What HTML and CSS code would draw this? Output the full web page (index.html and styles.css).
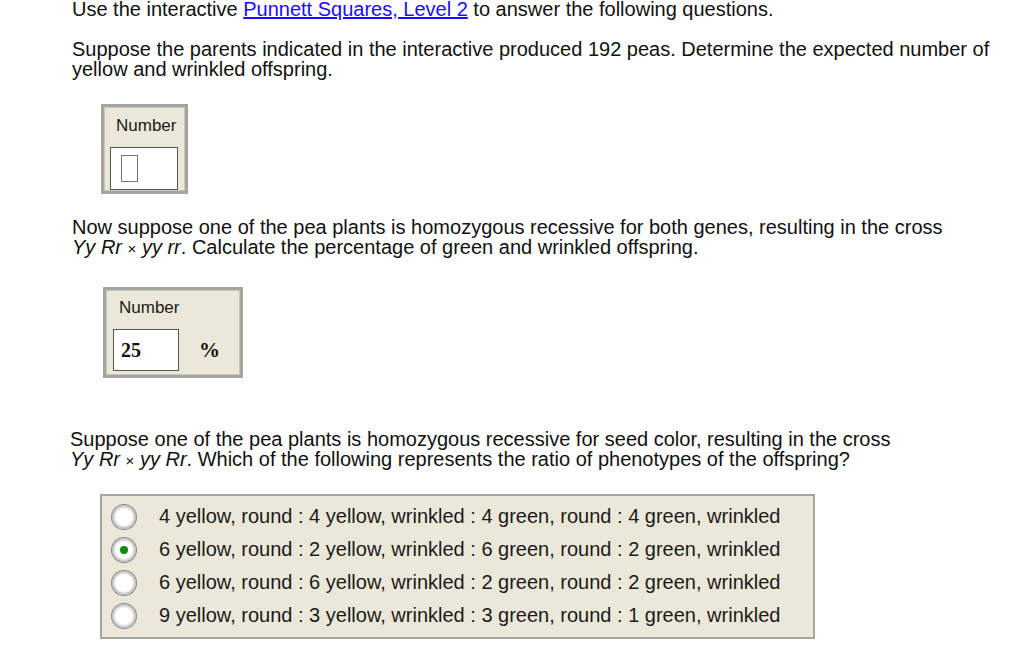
FILE: index.html
```html
<!DOCTYPE html>
<html lang="en">
<head>
    <meta charset="UTF-8">
    <title>Punnett Squares, Level 2 - Questions</title>
    <link rel="stylesheet" href="styles.css">
</head>
<body>
    <div class="page">
        <p class="intro">Use the interactive <a href="#">Punnett Squares, Level 2</a> to answer the following questions.</p>

        <p class="question q1">Suppose the parents indicated in the interactive produced 192 peas. Determine the expected number of yellow and wrinkled offspring.</p>

        <div class="answer-box box1">
            <div class="box-label">Number</div>
            <div class="num-input">
                <span class="empty-field"></span>
            </div>
        </div>

        <p class="question q2">Now suppose one of the pea plants is homozygous recessive for both genes, resulting in the cross <br><i>Yy Rr</i> <span class="times">×</span> <i>yy rr</i>. Calculate the percentage of green and wrinkled offspring.</p>

        <div class="answer-box box2">
            <div class="box-label">Number</div>
            <div class="num-row">
                <div class="num-input filled">25</div>
                <span class="unit">%</span>
            </div>
        </div>

        <p class="question q3">Suppose one of the pea plants is homozygous recessive for seed color, resulting in the cross <br><i>Yy Rr</i> <span class="times">×</span> <i>yy Rr</i>. Which of the following represents the ratio of phenotypes of the offspring?</p>

        <div class="choices">
            <div class="choice"><span class="radio"></span>4 yellow, round : 4 yellow, wrinkled : 4 green, round : 4 green, wrinkled</div>
            <div class="choice"><span class="radio checked"></span>6 yellow, round : 2 yellow, wrinkled : 6 green, round : 2 green, wrinkled</div>
            <div class="choice"><span class="radio"></span>6 yellow, round : 6 yellow, wrinkled : 2 green, round : 2 green, wrinkled</div>
            <div class="choice"><span class="radio"></span>9 yellow, round : 3 yellow, wrinkled : 3 green, round : 1 green, wrinkled</div>
        </div>
    </div>
</body>
</html>
```

FILE: styles.css
```css
* {
    margin: 0;
    padding: 0;
    box-sizing: border-box;
}
body {
    background-color: #fff;
    color: #111;
    font-family: "Liberation Sans", Arial, sans-serif;
    font-size: 20px;
}
.page {
    padding-left: 72px;
    width: 1000px;
    margin-top: -1px;
}
p {
    line-height: 20px;
}
.intro a {
    color: #1a0dff;
    text-decoration: underline;
}
.q1 {
    margin-top: 20px;
}
.q2 {
    margin-top: 23px;
}
.q3 {
    margin-top: 51px;
    margin-left: -2px;
}
.times {
    font-size: 15px;
}
.answer-box {
    background-color: #ebe8d9;
    border: 3px solid #a4a4a0;
    box-shadow: inset 0 0 0 1px #c9c7bc;
}
.box1 {
    margin-top: 25px;
    margin-left: 29px;
    width: 87px;
    height: 90px;
    padding: 9px 0 0 6px;
}
.box2 {
    margin-top: 28px;
    margin-left: 31px;
    width: 140px;
    height: 91px;
    padding: 8px 0 0 7px;
}
.box-label {
    font-size: 17px;
    line-height: 20px;
    color: #1a1a1a;
    padding-left: 6px;
}
.num-input {
    background-color: #fff;
    border: 1px solid #555;
}
.box1 .num-input {
    margin-top: 11px;
    width: 68px;
    height: 43px;
    padding: 7px 0 0 10px;
}
.empty-field {
    display: block;
    width: 17px;
    height: 27px;
    border: 1px solid #777;
}
.num-row {
    display: flex;
    align-items: center;
    margin-top: 11px;
}
.num-input.filled {
    width: 66px;
    height: 42px;
    padding-left: 7px;
    font-family: "Liberation Serif", "Times New Roman", serif;
    font-weight: bold;
    font-size: 20px;
    line-height: 40px;
}
.unit {
    margin-left: 20px;
    font-family: "Liberation Serif", "Times New Roman", serif;
    font-weight: bold;
    font-size: 21px;
}
.choices {
    margin-top: 23px;
    margin-left: 28px;
    width: 715px;
    height: 145px;
    background-color: #ebe8d9;
    border: 2px solid #a4a4a0;
    padding-top: 4px;
}
.choice {
    display: flex;
    align-items: center;
    height: 33px;
    padding-left: 10px;
    color: #1a1a1a;
}
.radio {
    width: 24px;
    height: 24px;
    border-radius: 50%;
    margin-right: 23px;
    background: radial-gradient(circle, #fff 0, #fff 48%, #bdbdbd 68%, #6e6e6e 100%);
    box-shadow: 0 0 0 1px #8a8a8a;
    position: relative;
}
.radio.checked::after {
    content: "";
    position: absolute;
    left: 8px;
    top: 8px;
    width: 8px;
    height: 8px;
    border-radius: 50%;
    background-color: #138a13;
}
```
